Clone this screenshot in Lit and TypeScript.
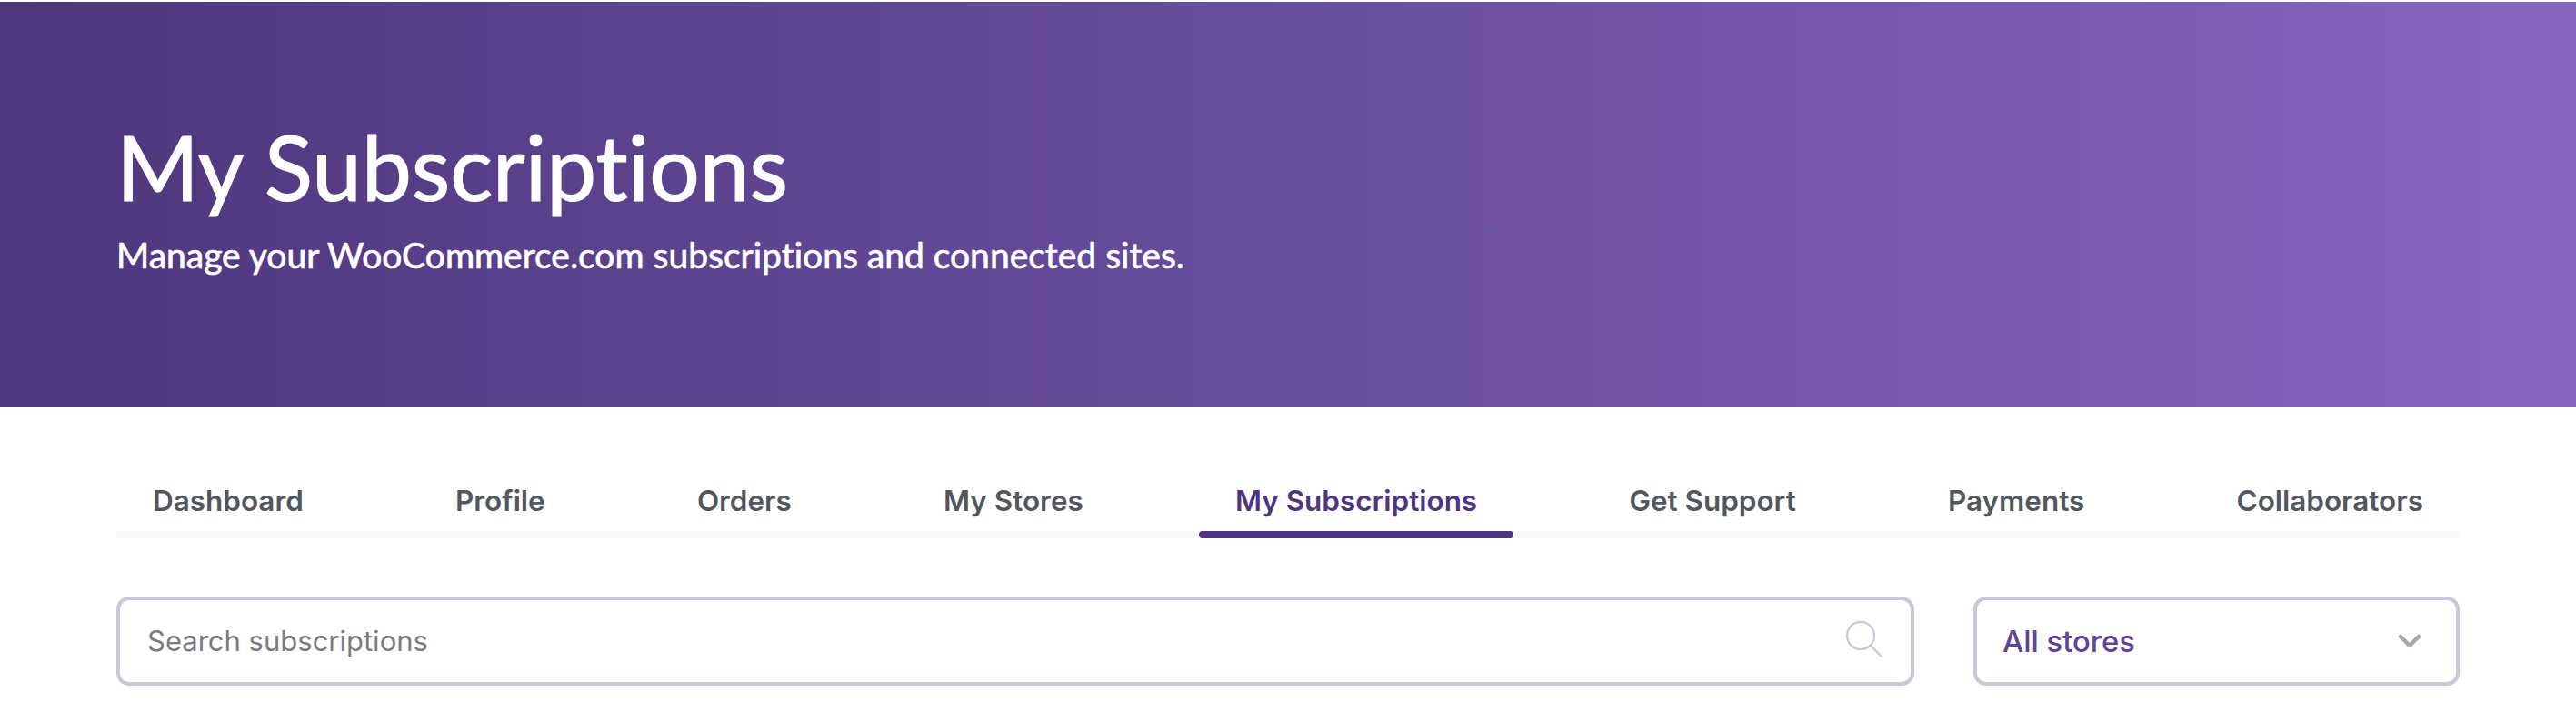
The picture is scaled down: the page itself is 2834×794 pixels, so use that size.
import { LitElement, html, css } from 'lit';
import { customElement, property } from 'lit/decorators.js';

const TABS = [
  'Dashboard',
  'Profile',
  'Orders',
  'My Stores',
  'My Subscriptions',
  'Get Support',
  'Payments',
  'Collaborators',
];

@customElement('app-root')
export class AppRoot extends LitElement {
  static styles = css`
    :host {
      display: block;
      font-family: Inter, "Liberation Sans", sans-serif;
      background: #fff;
    }
    .hero {
      height: 446px;
      margin-top: 2px;
      box-sizing: border-box;
      padding: 121px 128px 0;
      background: linear-gradient(90deg, #4f367c 0%, #8465c1 100%);
      color: #fff;
      font-family: Lato, "Open Sans", sans-serif;
      font-variant-ligatures: none;
    }
    .hero h1 {
      margin: 0;
      font-size: 98px;
      font-weight: 400;
      line-height: 120px;
      -webkit-text-stroke: 1.2px #fff;
    }
    .hero p {
      margin: 13px 0 0;
      font-size: 39px;
      font-weight: 400;
      line-height: 48px;
      -webkit-text-stroke: 0.7px #fff;
    }
    .content {
      padding: 72px 128px 0;
    }
    .tabs {
      display: flex;
      justify-content: space-between;
      border-bottom: 8px solid #f6f7f7;
      border-radius: 4px;
    }
    .tab {
      position: relative;
      padding: 6px 40px 8px;
      font-size: 31.45px;
      font-weight: 600;
      line-height: 50px;
      color: #50575e;
    }
    .tab.active {
      color: #4f3480;
    }
    .tab.active::after {
      content: '';
      position: absolute;
      left: 0;
      right: 0;
      bottom: -8px;
      height: 8px;
      border-radius: 4px;
      background: #4f3480;
    }
    .filters {
      display: flex;
      gap: 65px;
      margin-top: 64px;
    }
    .box {
      box-sizing: border-box;
      display: flex;
      align-items: center;
      justify-content: space-between;
      height: 98px;
      padding: 0 31px 0 30px;
      border: 4px solid #cbc7d6;
      border-radius: 14px;
      font-size: 31px;
      line-height: 40px;
    }
    .search {
      flex: 1;
      color: #787c82;
    }
    .search svg {
      margin-bottom: 4px;
    }
    .select {
      flex: 0 0 535px;
      padding: 0 38px 0 28px;
      color: #5f4396;
      font-size: 32.8px;
      font-weight: 500;
    }
    svg {
      display: block;
      flex: none;
    }
  `;

  @property({ type: String }) active = 'My Subscriptions';

  render() {
    return html`
      <header class="hero">
        <h1>My Subscriptions</h1>
        <p>Manage your WooCommerce.com subscriptions and connected sites.</p>
      </header>
      <main class="content">
        <nav class="tabs">
          ${TABS.map(
            (tab) => html`<div class="tab ${tab === this.active ? 'active' : ''}">${tab}</div>`
          )}
        </nav>
        <div class="filters">
          <div class="box search">
            <span>Search subscriptions</span>
            <svg width="40" height="40" viewBox="0 0 40 40" fill="none" stroke="#cbc7d6" stroke-width="2.2" stroke-linecap="round">
              <circle cx="16" cy="16" r="15"></circle>
              <line x1="27" y1="27" x2="39" y2="39"></line>
            </svg>
          </div>
          <div class="box select">
            <span>All stores</span>
            <svg width="26" height="16" viewBox="0 0 26 16" fill="none" stroke="#a7aaad" stroke-width="4.5" stroke-linecap="round" stroke-linejoin="round">
              <polyline points="3,3 13,13 23,3"></polyline>
            </svg>
          </div>
        </div>
      </main>
    `;
  }
}
